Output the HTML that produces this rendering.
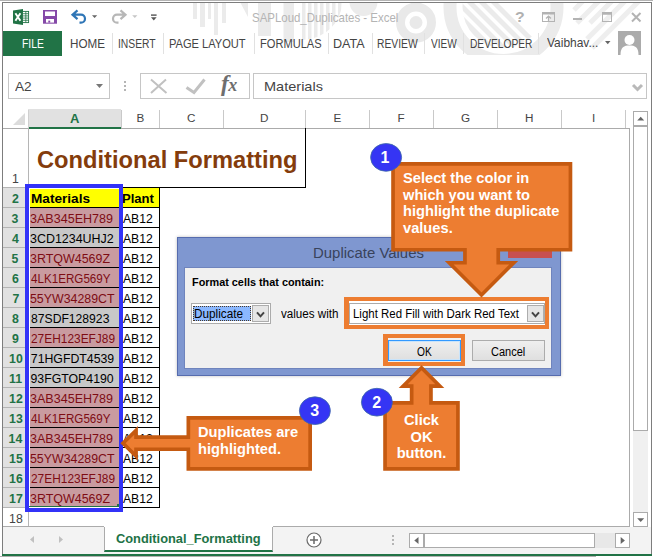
<!DOCTYPE html><html><head><meta charset="utf-8"><title>SAPLoud_Duplicates - Excel</title><style>
*{box-sizing:border-box;margin:0;padding:0}
html,body{width:653px;height:557px;overflow:hidden;background:#fff}
body{position:relative;font-family:"Liberation Sans",sans-serif;color:#444;}
.abs{position:absolute}
#win{position:absolute;left:2px;top:2px;width:650px;height:554px;background:#fff;border:1px solid #7d7d7d;border-bottom:none;overflow:hidden}
.t{position:absolute;white-space:nowrap;line-height:1;transform-origin:0 0}
.tab{position:absolute;top:37px;font-size:12px;color:#444;white-space:nowrap;line-height:14px;letter-spacing:-0.2px}
.sep{position:absolute;top:33px;width:1px;height:21px;background:#e1e1e1}
.ch{position:absolute;top:111px;height:17px;font-size:12px;color:#444;text-align:center;line-height:17px}
.cs{position:absolute;top:110px;width:1px;height:18px;background:#c9c9c9}
.rh{position:absolute;left:3px;width:25px;height:20px;font-size:12.5px;text-align:center;line-height:21px;border-bottom:1px solid #b5b5b5}
.rh.sel{background:#e1e1e1;color:#217346;font-weight:bold}
.ca{position:absolute;left:30px;width:89px;height:19px;font-size:12.3px;line-height:20px;padding-left:2px;white-space:nowrap;overflow:hidden}
.cb{position:absolute;left:123px;width:36px;height:19px;font-size:12.3px;line-height:20px;padding-left:1px;white-space:nowrap;color:#000;background:#fff}
.dup{background:#c99ba0;color:#8a1019}
.uni{background:#c8c8c8;color:#000}
.hdr{background:#ffff00;color:#000;font-weight:bold}
.hl{position:absolute;height:1px;background:#000}
.vl{position:absolute;width:1px;background:#000}
</style></head><body>
<div class="abs" style="left:0;top:0;width:653px;height:1px;background:#b4b4b4"></div>
<div id="win"></div>
<svg class="abs" style="left:3px;top:3px" width="648" height="52" viewBox="3 3 648 52">
<g fill="#ebebeb">
<rect x="193" y="2" width="4" height="17"/><rect x="200" y="2" width="5" height="25"/><rect x="208" y="2" width="3" height="17"/>
<rect x="214" y="2" width="4" height="33"/><rect x="222" y="2" width="4" height="21"/>
<polygon points="240,2 248,2 248,17"/>
<rect x="258" y="2" width="13" height="34"/><rect x="283.5" y="2" width="10.5" height="40"/>
<clipPath id="qd"><path d="M302,2 V40 A40,38 0 0 0 342,2 Z"/></clipPath>
<g clip-path="url(#qd)"><rect x="302" y="2" width="3.5" height="40"/><rect x="308" y="2" width="3.5" height="40"/><rect x="314" y="2" width="3.5" height="40"/><rect x="320" y="2" width="3.5" height="40"/><rect x="326" y="2" width="3.5" height="40"/><rect x="332" y="2" width="3.5" height="40"/><rect x="338" y="2" width="3.5" height="40"/></g>
<path d="M349.5,2 A14,14 0 0 0 377.5,2 Z"/>
</g>
<circle cx="416" cy="22.5" r="15.5" fill="none" stroke="#e9e9e9" stroke-width="9"/>
<circle cx="416" cy="22.5" r="6.5" fill="#e9e9e9"/>
<clipPath id="cp"><rect x="3" y="3" width="648" height="52"/></clipPath>
<clipPath id="hd"><circle cx="503.5" cy="7" r="41"/></clipPath>
<g clip-path="url(#cp)">
<circle cx="503.5" cy="7" r="53.5" fill="none" stroke="#ebebeb" stroke-width="13"/>
<g clip-path="url(#hd)"><g transform="translate(503.5,7) rotate(45)" fill="#ebebeb">
<rect x="-50" y="1" width="100" height="5"/><rect x="-50" y="9.5" width="100" height="5"/><rect x="-50" y="18" width="100" height="5"/><rect x="-50" y="26.5" width="100" height="5"/><rect x="-50" y="35" width="100" height="6"/>
</g></g>
<g stroke="#eeeeee" stroke-width="5">
<line x1="574" y1="10" x2="584" y2="0"/><line x1="577" y1="23" x2="600" y2="0"/><line x1="590" y1="23" x2="613" y2="0"/><line x1="587" y1="39" x2="626" y2="0"/><line x1="592" y1="48" x2="640" y2="0"/>
</g>
</g>
</svg>
<svg class="abs" style="left:3px;top:2px" width="647" height="28" viewBox="3 2 647 28">
<!-- excel icon -->
<path d="M13,10.6 L23,9 L23,25 L13,23.4 Z" fill="#217346"/>
<rect x="22.5" y="11.4" width="6.1" height="11.2" fill="#fff" stroke="#217346" stroke-width="0.9"/>
<g stroke="#217346" stroke-width="0.8"><line x1="23" y1="13.7" x2="28.5" y2="13.7"/><line x1="23" y1="15.9" x2="28.5" y2="15.9"/><line x1="23" y1="18.1" x2="28.5" y2="18.1"/><line x1="23" y1="20.3" x2="28.5" y2="20.3"/><line x1="25.8" y1="11.5" x2="25.8" y2="22.5"/></g>
<path d="M15.4,13.3 L20.4,20.8 M20.4,13.3 L15.4,20.8" stroke="#fff" stroke-width="1.9" fill="none"/>
<!-- save icon -->
<rect x="43" y="10" width="14" height="13.7" fill="#8549a8"/>
<rect x="45" y="11.5" width="10" height="4.5" fill="#fff"/>
<rect x="46" y="19" width="8" height="3.6" fill="#fff"/>
<rect x="48.3" y="20.6" width="1.9" height="2" fill="#8549a8"/>
<!-- undo -->
<path d="M77.5,10.3 L72.5,14.7 L77.5,19.1 M72.8,14.7 H81 A4,4 0 0 1 81,22.7 H79.5" fill="none" stroke="#2e75b6" stroke-width="2.2" stroke-linejoin="miter"/>
<path d="M92,15.2 h5.2 l-2.6,2.9 z" fill="#666"/>
<!-- redo -->
<path d="M120.5,10.3 L125.5,14.7 L120.5,19.1 M125.2,14.7 H117 A4,4 0 0 0 117,22.7 H118.5" fill="none" stroke="#b7b7b7" stroke-width="2.2" stroke-linejoin="miter"/>
<path d="M132.2,15.2 h5.2 l-2.6,2.9 z" fill="#c6c6c6"/>
<!-- customize -->
<rect x="151" y="14.4" width="5.6" height="1.4" fill="#555"/>
<path d="M151,17.3 h5.6 l-2.8,3.2 z" fill="#555"/>
<!-- window controls -->
<g fill="none" stroke="#b3b3b3">
<rect x="542.5" y="12.5" width="12" height="9" stroke-width="1"/>
<line x1="542" y1="13.5" x2="555" y2="13.5" stroke-width="2"/>
<path d="M548.5,21 V16 M546,18.5 L548.5,16 L551,18.5" stroke-width="1.2"/>
<line x1="573" y1="19" x2="582" y2="19" stroke-width="2"/>
<rect x="602.5" y="12.5" width="9" height="9" stroke-width="1"/>
<line x1="602" y1="13.5" x2="612" y2="13.5" stroke-width="2.5"/>
<path d="M632,13 L640.5,21.5 M640.5,13 L632,21.5" stroke-width="2"/>
</g>
</svg>
<div class="t" style="left:514.9px;top:7.8px;font:bold 15px Liberation Sans,sans-serif;transform:scaleX(1.0571);color:#b0b0b0;">?</div>
<div class="t" style="left:252.1px;top:9.8px;font:13px Liberation Sans,sans-serif;transform:scaleX(0.8805);color:#b4b4b4;">SAPLoud_Duplicates - Excel</div>
<div class="abs" style="left:3px;top:31px;width:59px;height:25px;background:#217346"></div>
<div class="t" style="left:21.5px;top:37px;font:12px Liberation Sans,sans-serif;transform:scaleX(0.8625);color:#fff;">FILE</div>
<div class="t" style="left:70.4px;top:37px;font:12px Liberation Sans,sans-serif;transform:scaleX(0.9714);color:#444;">HOME</div>
<div class="t" style="left:118.1px;top:37px;font:12px Liberation Sans,sans-serif;transform:scaleX(0.8605);color:#444;">INSERT</div>
<div class="t" style="left:169.3px;top:37px;font:12px Liberation Sans,sans-serif;transform:scaleX(0.9244);color:#444;">PAGE LAYOUT</div>
<div class="t" style="left:259.6px;top:37px;font:12px Liberation Sans,sans-serif;transform:scaleX(0.9246);color:#444;">FORMULAS</div>
<div class="t" style="left:333px;top:37px;font:12px Liberation Sans,sans-serif;transform:scaleX(1.0483);color:#444;">DATA</div>
<div class="t" style="left:377.1px;top:37px;font:12px Liberation Sans,sans-serif;transform:scaleX(0.8587);color:#444;">REVIEW</div>
<div class="t" style="left:431px;top:37px;font:12px Liberation Sans,sans-serif;transform:scaleX(0.8387);color:#444;">VIEW</div>
<div class="t" style="left:469.6px;top:37px;font:12px Liberation Sans,sans-serif;transform:scaleX(0.85);color:#444;">DEVELOPER</div>
<div class="sep" style="left:112px"></div>
<div class="sep" style="left:163px"></div>
<div class="sep" style="left:254px"></div>
<div class="sep" style="left:328px"></div>
<div class="sep" style="left:372px"></div>
<div class="sep" style="left:424px"></div>
<div class="sep" style="left:463px"></div>
<div class="sep" style="left:538px"></div>
<div class="t" style="left:547.4px;top:35px;font:13px Liberation Sans,sans-serif;transform:scaleX(0.92);color:#444;">Vaibhav...</div>
<svg class="abs" style="left:604px;top:30px" width="40" height="26" viewBox="604 30 40 26"><path d="M605,41 h5.5 l-2.75,3.2 z" fill="#666"/><rect x="618" y="31" width="23" height="24" fill="#ababab"/><circle cx="629.5" cy="40" r="5" fill="#fff"/><path d="M620.5,55 C620.5,47 624,45.5 629.5,45.5 C635,45.5 638.5,47 638.5,55 Z" fill="#fff"/></svg>
<div class="abs" style="left:8px;top:73px;width:102px;height:26px;border:1px solid #c6c6c6;background:#fff"></div>
<div class="t" style="left:15.2px;top:80.2px;font:12.5px Liberation Sans,sans-serif;transform:scaleX(1.0933);color:#444;">A2</div>
<svg class="abs" style="left:90px;top:73px" width="170" height="26" viewBox="90 73 170 26"><path d="M96,84 h7 l-3.5,4 z" fill="#777"/><g fill="#b5b5b5"><rect x="124" y="81" width="2" height="2"/><rect x="124" y="85" width="2" height="2"/><rect x="124" y="89" width="2" height="2"/></g><path d="M151,79.5 L166.5,93 M166,79.5 L151,93" stroke="#c1c1c1" stroke-width="2" fill="none"/><path d="M186.5,87.5 L194,92.5 L204.5,79.5" stroke="#c1c1c1" stroke-width="3" fill="none"/></svg>
<div class="abs" style="left:140px;top:73px;width:110px;height:26px;border:1px solid #c6c6c6;"></div>
<div class="t" style="left:221px;top:71.5px;font-family:'Liberation Serif',serif;font-style:italic;font-weight:bold;font-size:23.5px;color:#6e6e6e;letter-spacing:-0.5px">f<span style="font-size:18px;letter-spacing:0">x</span></div>
<div class="abs" style="left:253px;top:73px;width:394px;height:26px;border:1px solid #c6c6c6;background:#fff"></div>
<div class="t" style="left:264.4px;top:78.8px;font:13px Liberation Sans,sans-serif;transform:scaleX(1.1176);color:#444;">Materials</div>
<svg class="abs" style="left:630px;top:82px" width="16" height="12" viewBox="630 82 16 12"><path d="M633,85 L637.5,89.5 L642,85" stroke="#b9b9b9" stroke-width="3" fill="none"/></svg>
<div class="abs" style="left:3px;top:109px;width:627px;height:20px;background:#fff;border-bottom:1px solid #ababab"></div>
<svg class="abs" style="left:3px;top:109px" width="26" height="19" viewBox="3 109 26 19"><path d="M25,113 V125 H13 Z" fill="#dcdcdc"/></svg>
<div class="abs" style="left:28px;top:109px;width:93px;height:20px;background:#e1e1e1;border-bottom:2px solid #217346"></div>
<div class="t" style="left:70px;top:110.6px;font:bold 13px Liberation Sans,sans-serif;color:#217346;">A</div>
<div class="cs" style="left:121px"></div>
<div class="t" style="left:136.5px;top:111.2px;font:11.7px Liberation Sans,sans-serif;color:#444;">B</div>
<div class="cs" style="left:159px"></div>
<div class="t" style="left:187px;top:111.2px;font:11.7px Liberation Sans,sans-serif;color:#444;">C</div>
<div class="cs" style="left:223px"></div>
<div class="t" style="left:260px;top:111.2px;font:11.7px Liberation Sans,sans-serif;color:#444;">D</div>
<div class="cs" style="left:305px"></div>
<div class="t" style="left:333.5px;top:111.2px;font:11.7px Liberation Sans,sans-serif;color:#444;">E</div>
<div class="cs" style="left:369px"></div>
<div class="t" style="left:397.5px;top:111.2px;font:11.7px Liberation Sans,sans-serif;color:#444;">F</div>
<div class="cs" style="left:433px"></div>
<div class="t" style="left:461px;top:111.2px;font:11.7px Liberation Sans,sans-serif;color:#444;">G</div>
<div class="cs" style="left:497px"></div>
<div class="t" style="left:525px;top:111.2px;font:11.7px Liberation Sans,sans-serif;color:#444;">H</div>
<div class="cs" style="left:561px"></div>
<div class="t" style="left:592px;top:111.2px;font:11.7px Liberation Sans,sans-serif;color:#444;">I</div>
<div class="cs" style="left:625px"></div>
<div class="cs" style="left:28px;background:#d0d0d0"></div>
<div class="abs" style="left:28px;top:128px;width:1px;height:398px;background:#b5b5b5"></div>
<div class="rh" style="top:128px;height:60px"></div>
<div class="t" style="left:12.1px;top:172.3px;font:12.3px Liberation Sans,sans-serif;color:#444;">1</div>
<div class="rh sel" style="top:188px"></div>
<div class="t" style="left:12.1px;top:191.9px;font:bold 12.3px Liberation Sans,sans-serif;color:#217346;">2</div>
<div class="rh sel" style="top:208px"></div>
<div class="t" style="left:11.6px;top:211.9px;font:bold 12.3px Liberation Sans,sans-serif;color:#217346;">3</div>
<div class="rh sel" style="top:228px"></div>
<div class="t" style="left:12.1px;top:231.9px;font:bold 12.3px Liberation Sans,sans-serif;color:#217346;">4</div>
<div class="rh sel" style="top:248px"></div>
<div class="t" style="left:11.6px;top:251.9px;font:bold 12.3px Liberation Sans,sans-serif;color:#217346;">5</div>
<div class="rh sel" style="top:268px"></div>
<div class="t" style="left:12.1px;top:271.9px;font:bold 12.3px Liberation Sans,sans-serif;color:#217346;">6</div>
<div class="rh sel" style="top:288px"></div>
<div class="t" style="left:12.6px;top:291.9px;font:bold 12.3px Liberation Sans,sans-serif;color:#217346;">7</div>
<div class="rh sel" style="top:308px"></div>
<div class="t" style="left:12.1px;top:311.9px;font:bold 12.3px Liberation Sans,sans-serif;color:#217346;">8</div>
<div class="rh sel" style="top:328px"></div>
<div class="t" style="left:12.1px;top:331.9px;font:bold 12.3px Liberation Sans,sans-serif;color:#217346;">9</div>
<div class="rh sel" style="top:348px"></div>
<div class="t" style="left:9.1px;top:351.9px;font:bold 12.3px Liberation Sans,sans-serif;color:#217346;">10</div>
<div class="rh sel" style="top:368px"></div>
<div class="t" style="left:9.1px;top:371.9px;font:bold 12.3px Liberation Sans,sans-serif;color:#217346;">11</div>
<div class="rh sel" style="top:388px"></div>
<div class="t" style="left:9.1px;top:391.9px;font:bold 12.3px Liberation Sans,sans-serif;color:#217346;">12</div>
<div class="rh sel" style="top:408px"></div>
<div class="t" style="left:9.1px;top:411.9px;font:bold 12.3px Liberation Sans,sans-serif;color:#217346;">13</div>
<div class="rh sel" style="top:428px"></div>
<div class="t" style="left:8.6px;top:431.9px;font:bold 12.3px Liberation Sans,sans-serif;color:#217346;">14</div>
<div class="rh sel" style="top:448px"></div>
<div class="t" style="left:9.1px;top:451.9px;font:bold 12.3px Liberation Sans,sans-serif;color:#217346;">15</div>
<div class="rh sel" style="top:468px"></div>
<div class="t" style="left:9.1px;top:471.9px;font:bold 12.3px Liberation Sans,sans-serif;color:#217346;">16</div>
<div class="rh sel" style="top:488px"></div>
<div class="t" style="left:9.1px;top:491.9px;font:bold 12.3px Liberation Sans,sans-serif;color:#217346;">17</div>
<div class="rh" style="top:508px;height:18px;border-bottom:none"></div>
<div class="t" style="left:9.1px;top:511.9px;font:12.3px Liberation Sans,sans-serif;color:#444;">18</div>
<div class="abs" style="left:3px;top:526px;width:627px;height:1px;background:#ababab"></div>
<div class="abs" style="left:629px;top:128px;width:1px;height:399px;background:#ababab"></div>
<div class="abs" style="left:29px;top:128px;width:277px;height:60px;border-right:1px solid #000;border-bottom:1px solid #000;"></div>
<div class="t" style="left:36.5px;top:146.6px;font:bold 23px Liberation Sans,sans-serif;transform:scaleX(1.0299);color:#843c0c;">Conditional Formatting</div>
<div class="ca hdr" style="top:188px"></div>
<div class="cb hdr" style="top:188px"></div>
<div class="t" style="left:30.9px;top:191.7px;font:bold 12.3px Liberation Sans,sans-serif;transform:scaleX(1.1077);color:#000;">Materials</div>
<div class="t" style="left:122.3px;top:191.7px;font:bold 12.3px Liberation Sans,sans-serif;transform:scaleX(1.0621);color:#000;">Plant</div>
<div class="ca dup" style="top:208px"></div>
<div class="cb" style="top:208px"></div>
<div class="t" style="left:30px;top:212.1px;font:12.3px Liberation Sans,sans-serif;transform:scaleX(1.02);color:#7e0c14;">3AB345EH789</div>
<div class="t" style="left:123.2px;top:212.1px;font:12.3px Liberation Sans,sans-serif;transform:scaleX(0.99);color:#000;">AB12</div>
<div class="ca uni" style="top:228px"></div>
<div class="cb" style="top:228px"></div>
<div class="t" style="left:30px;top:232.1px;font:12.3px Liberation Sans,sans-serif;transform:scaleX(1.0123);color:#000;">3CD1234UHJ2</div>
<div class="t" style="left:123.2px;top:232.1px;font:12.3px Liberation Sans,sans-serif;transform:scaleX(0.99);color:#000;">AB12</div>
<div class="ca dup" style="top:248px"></div>
<div class="cb" style="top:248px"></div>
<div class="t" style="left:30px;top:252.1px;font:12.3px Liberation Sans,sans-serif;transform:scaleX(1.0128);color:#7e0c14;">3RTQW4569Z</div>
<div class="t" style="left:123.2px;top:252.1px;font:12.3px Liberation Sans,sans-serif;transform:scaleX(0.99);color:#000;">AB12</div>
<div class="ca dup" style="top:268px"></div>
<div class="cb" style="top:268px"></div>
<div class="t" style="left:31.2px;top:272.1px;font:12.3px Liberation Sans,sans-serif;transform:scaleX(0.9464);color:#7e0c14;">4LK1ERG569Y</div>
<div class="t" style="left:123.2px;top:272.1px;font:12.3px Liberation Sans,sans-serif;transform:scaleX(0.99);color:#000;">AB12</div>
<div class="ca dup" style="top:288px"></div>
<div class="cb" style="top:288px"></div>
<div class="t" style="left:30.2px;top:292.1px;font:12.3px Liberation Sans,sans-serif;transform:scaleX(1.0048);color:#7e0c14;">55YW34289CT</div>
<div class="t" style="left:123.2px;top:292.1px;font:12.3px Liberation Sans,sans-serif;transform:scaleX(0.99);color:#000;">AB12</div>
<div class="ca uni" style="top:308px"></div>
<div class="cb" style="top:308px"></div>
<div class="t" style="left:30.9px;top:312.1px;font:12.3px Liberation Sans,sans-serif;transform:scaleX(0.9885);color:#000;">87SDF128923</div>
<div class="t" style="left:123.2px;top:312.1px;font:12.3px Liberation Sans,sans-serif;transform:scaleX(0.99);color:#000;">AB12</div>
<div class="ca dup" style="top:328px"></div>
<div class="cb" style="top:328px"></div>
<div class="t" style="left:30.9px;top:332.1px;font:12.3px Liberation Sans,sans-serif;transform:scaleX(0.9682);color:#7e0c14;">27EH123EFJ89</div>
<div class="t" style="left:123.2px;top:332.1px;font:12.3px Liberation Sans,sans-serif;transform:scaleX(0.99);color:#000;">AB12</div>
<div class="ca uni" style="top:348px"></div>
<div class="cb" style="top:348px"></div>
<div class="t" style="left:30.8px;top:352.1px;font:12.3px Liberation Sans,sans-serif;color:#000;">71HGFDT4539</div>
<div class="t" style="left:123.2px;top:352.1px;font:12.3px Liberation Sans,sans-serif;transform:scaleX(0.99);color:#000;">AB12</div>
<div class="ca uni" style="top:368px"></div>
<div class="cb" style="top:368px"></div>
<div class="t" style="left:30.5px;top:372.1px;font:12.3px Liberation Sans,sans-serif;color:#000;">93FGTOP4190</div>
<div class="t" style="left:123.2px;top:372.1px;font:12.3px Liberation Sans,sans-serif;transform:scaleX(0.99);color:#000;">AB12</div>
<div class="ca dup" style="top:388px"></div>
<div class="cb" style="top:388px"></div>
<div class="t" style="left:30px;top:392.1px;font:12.3px Liberation Sans,sans-serif;transform:scaleX(1.02);color:#7e0c14;">3AB345EH789</div>
<div class="t" style="left:123.2px;top:392.1px;font:12.3px Liberation Sans,sans-serif;transform:scaleX(0.99);color:#000;">AB12</div>
<div class="ca dup" style="top:408px"></div>
<div class="cb" style="top:408px"></div>
<div class="t" style="left:31.2px;top:412.1px;font:12.3px Liberation Sans,sans-serif;transform:scaleX(0.9464);color:#7e0c14;">4LK1ERG569Y</div>
<div class="t" style="left:123.2px;top:412.1px;font:12.3px Liberation Sans,sans-serif;transform:scaleX(0.99);color:#000;">AB12</div>
<div class="ca dup" style="top:428px"></div>
<div class="cb" style="top:428px"></div>
<div class="t" style="left:30px;top:432.1px;font:12.3px Liberation Sans,sans-serif;transform:scaleX(1.02);color:#7e0c14;">3AB345EH789</div>
<div class="t" style="left:123.2px;top:432.1px;font:12.3px Liberation Sans,sans-serif;transform:scaleX(0.99);color:#000;">AB12</div>
<div class="ca dup" style="top:448px"></div>
<div class="cb" style="top:448px"></div>
<div class="t" style="left:30.2px;top:452.1px;font:12.3px Liberation Sans,sans-serif;transform:scaleX(1.0048);color:#7e0c14;">55YW34289CT</div>
<div class="t" style="left:123.2px;top:452.1px;font:12.3px Liberation Sans,sans-serif;transform:scaleX(0.99);color:#000;">AB12</div>
<div class="ca dup" style="top:468px"></div>
<div class="cb" style="top:468px"></div>
<div class="t" style="left:30.9px;top:472.1px;font:12.3px Liberation Sans,sans-serif;transform:scaleX(0.9682);color:#7e0c14;">27EH123EFJ89</div>
<div class="t" style="left:123.2px;top:472.1px;font:12.3px Liberation Sans,sans-serif;transform:scaleX(0.99);color:#000;">AB12</div>
<div class="ca dup" style="top:488px"></div>
<div class="cb" style="top:488px"></div>
<div class="t" style="left:30px;top:492.1px;font:12.3px Liberation Sans,sans-serif;transform:scaleX(1.0128);color:#7e0c14;">3RTQW4569Z</div>
<div class="t" style="left:123.2px;top:492.1px;font:12.3px Liberation Sans,sans-serif;transform:scaleX(0.99);color:#000;">AB12</div>
<div class="hl" style="left:123px;top:187px;width:37px"></div>
<div class="hl" style="left:30px;top:207px;width:130px"></div>
<div class="hl" style="left:30px;top:227px;width:130px"></div>
<div class="hl" style="left:30px;top:247px;width:130px"></div>
<div class="hl" style="left:30px;top:267px;width:130px"></div>
<div class="hl" style="left:30px;top:287px;width:130px"></div>
<div class="hl" style="left:30px;top:307px;width:130px"></div>
<div class="hl" style="left:30px;top:327px;width:130px"></div>
<div class="hl" style="left:30px;top:347px;width:130px"></div>
<div class="hl" style="left:30px;top:367px;width:130px"></div>
<div class="hl" style="left:30px;top:387px;width:130px"></div>
<div class="hl" style="left:30px;top:407px;width:130px"></div>
<div class="hl" style="left:30px;top:427px;width:130px"></div>
<div class="hl" style="left:30px;top:447px;width:130px"></div>
<div class="hl" style="left:30px;top:467px;width:130px"></div>
<div class="hl" style="left:30px;top:487px;width:130px"></div>
<div class="hl" style="left:123px;top:507px;width:37px"></div>
<div class="abs" style="left:29px;top:188px;width:91px;height:1px;background:#fff"></div>
<div class="abs" style="left:29px;top:507px;width:91px;height:1px;background:#fff"></div>
<div class="vl" style="left:159px;top:187px;height:321px"></div>
<div class="vl" style="left:122px;top:187px;height:321px"></div>
<div class="abs" style="left:29px;top:506px;width:88px;height:1px;background:#217346"></div><div class="abs" style="left:117px;top:504px;width:2px;height:3px;background:#217346"></div>
<div class="abs" style="left:25px;top:184px;width:98px;height:328px;border:4px solid #3232f8"></div>
<div class="abs" style="left:3px;top:527px;width:648px;height:27px;background:#f3f3f3"></div>
<div class="abs" style="left:104px;top:527px;width:169px;height:25px;background:#fff;border-left:1px solid #ababab;border-right:1px solid #ababab;border-bottom:2px solid #217346"></div>
<div class="abs" style="left:104px;top:526px;width:169px;height:1px;background:#fff"></div>
<div class="t" style="left:116px;top:531.2px;font:bold 13px Liberation Sans,sans-serif;transform:scaleX(0.9863);color:#217346;">Conditional_Formatting</div>
<svg class="abs" style="left:3px;top:527px" width="648" height="27" viewBox="3 527 648 27">
<path d="M34,536 v7 l-4,-3.5 z" fill="#c0c0c0"/><path d="M59,536 v7 l4,-3.5 z" fill="#c0c0c0"/>
<circle cx="314" cy="540" r="7" fill="#fff" stroke="#6a6a6a" stroke-width="1.2"/><path d="M310,540 h8 M314,536 v8" stroke="#6a6a6a" stroke-width="1.5"/>
<g fill="#b5b5b5"><rect x="392" y="535" width="2" height="2"/><rect x="392" y="539" width="2" height="2"/><rect x="392" y="543" width="2" height="2"/></g>
<rect x="409.5" y="533.5" width="14" height="14" fill="#fff" stroke="#ababab"/><path d="M418.5,537 v7 l-4.2,-3.5 z" fill="#666"/>
<rect x="424.5" y="533.5" width="170" height="14" fill="#fff" stroke="#ababab"/>
<rect x="595" y="533" width="20" height="15" fill="#e8e8e8"/>
<rect x="615.5" y="533.5" width="14" height="14" fill="#fff" stroke="#ababab"/><path d="M620.7,537 v7 l4.2,-3.5 z" fill="#666"/>
</svg>
<div class="abs" style="left:2px;top:554px;width:650px;height:2px;background:#217346"></div>
<div class="abs" style="left:0px;top:556px;width:596px;height:1px;background:#b0b0b0"></div>
<div class="abs" style="left:630px;top:109px;width:21px;height:418px;background:#fff"></div>
<svg class="abs" style="left:630px;top:109px" width="21" height="420" viewBox="630 109 21 420">
<rect x="633.5" y="111.5" width="14" height="14" fill="#fff" stroke="#ababab"/><path d="M637.2,120.5 h7 l-3.5,-3.8 z" fill="#666"/>
<rect x="633.5" y="126.5" width="14" height="304" fill="#fff" stroke="#ababab"/>
<rect x="633" y="431" width="15" height="81" fill="#f0f0f0"/>
<rect x="633.5" y="512.5" width="14" height="14" fill="#fff" stroke="#ababab"/><path d="M637.2,518.2 h7 l-3.5,3.8 z" fill="#666"/>
</svg>
<div class="abs" style="left:177px;top:237px;width:384px;height:139px;background:#7f97d0;border:1px solid #566cae;box-shadow:0 0 3px rgba(0,0,0,.25)"></div>
<div class="abs" style="left:184px;top:267px;width:368px;height:102px;background:#f0f0f0;border:1px solid #6f84bd"></div>
<div class="abs" style="left:508px;top:238px;width:44px;height:20px;background:#c75050"></div>
<svg class="abs" style="left:508px;top:238px" width="44" height="20" viewBox="0 0 44 20"><path d="M18,3.5 L26,11.5 M26,3.5 L18,11.5" stroke="#fff" stroke-width="1.6" fill="none"/></svg>
<div class="t" style="left:312.8px;top:243.5px;font:15.5px Liberation Sans,sans-serif;transform:scaleX(0.9632);color:#39435c;">Duplicate Values</div>
<div class="t" style="left:191.5px;top:275.5px;font:bold 11.5px Liberation Sans,sans-serif;transform:scaleX(0.9442);color:#000;">Format cells that contain:</div>
<div class="abs" style="left:191px;top:303px;width:80px;height:21px;background:#fff;border:1px solid #ababab"></div>
<div class="abs" style="left:193px;top:306px;width:58px;height:15px;background:#8bb8ff;outline:1px dotted #4a3a2a;outline-offset:-1px"></div>
<div class="t" style="left:194.4px;top:306.9px;font:12px Liberation Sans,sans-serif;transform:scaleX(0.9796);color:#000;">Duplicate</div>
<div class="abs" style="left:252px;top:305px;width:17px;height:17px;background:#e6e6e6;border:1px solid #adadad"></div>
<svg class="abs" style="left:252px;top:305px" width="17" height="17" viewBox="0 0 17 17"><path d="M5,7.3 L8.5,11.3 L12,7.3" stroke="#444" stroke-width="2" fill="none"/></svg>
<div class="t" style="left:281px;top:306.6px;font:12px Liberation Sans,sans-serif;transform:scaleX(0.9695);color:#000;">values with</div>
<div class="abs" style="left:344px;top:297px;width:205px;height:32px;border:4px solid #ed7d31;border-left-width:5px;background:#fff"></div>
<div class="abs" style="left:349px;top:303px;width:196px;height:21px;background:#fff;border:1px solid #ababab"></div>
<div class="t" style="left:352.5px;top:306.5px;font:12px Liberation Sans,sans-serif;transform:scaleX(0.9543);color:#000;">Light Red Fill with Dark Red Text</div>
<div class="abs" style="left:527px;top:305px;width:17px;height:17px;background:#e6e6e6;border:1px solid #adadad"></div>
<svg class="abs" style="left:527px;top:305px" width="17" height="17" viewBox="0 0 17 17"><path d="M5,7.3 L8.5,11.3 L12,7.3" stroke="#444" stroke-width="2" fill="none"/></svg>
<div class="abs" style="left:383px;top:334px;width:82px;height:32px;border:4px solid #ed7d31;border-left-width:5px;background:#f0f0f0"></div>
<div class="abs" style="left:388px;top:340px;width:73px;height:21px;background:linear-gradient(#efefef,#dfdfdf);border:1px solid #3399ff;box-shadow:inset 0 0 0 1px #c9e4fb"></div>
<div class="t" style="left:417.2px;top:344.8px;font:12px Liberation Sans,sans-serif;transform:scaleX(0.85);color:#000;">OK</div>
<div class="abs" style="left:472px;top:340px;width:73px;height:21px;background:linear-gradient(#efefef,#dfdfdf);border:1px solid #acacac"></div>
<div class="t" style="left:490.7px;top:344.8px;font:12px Liberation Sans,sans-serif;transform:scaleX(0.9167);color:#000;">Cancel</div>
<svg class="abs" style="left:0;top:0" width="653" height="557" viewBox="0 0 653 557">
<g fill="#ed7d31" stroke="#c55a11" stroke-width="3.7" stroke-linejoin="miter">
<path d="M393.05,163.85 H570.45 V249.75 H498.25 V262.75 H513.73 L481.5,294.98 L449.27,262.75 H464.95 V249.75 H393.05 Z"/>
<path d="M421.5,367.8 L439.85,386.15 H430.95 V402.95 H457.95 V468.85 H385.05 V402.95 H411.65 V386.15 H403.15 Z"/>
<path d="M188.35,417.85 H310.15 V468.95 H188.35 V449.25 H136.05 V456 L123,443.2 L136.05,430.4 V437.05 H188.35 Z"/>
</g>
<g fill="#3535f4" stroke="#3d6aa6" stroke-width="0.8">
<ellipse cx="386.1" cy="157.4" rx="15.5" ry="13.9"/><ellipse cx="376.9" cy="402.2" rx="15.5" ry="13.9"/><ellipse cx="314.9" cy="410.7" rx="15.5" ry="13.9"/>
</g>
<g font-family="Liberation Sans, sans-serif" font-weight="bold" fill="#fff">
<g font-size="16px" text-anchor="middle"><text x="384.9" y="163.1">1</text><text x="376.6" y="407.9">2</text><text x="314.6" y="416.4">3</text></g>
<g font-size="14.67px">
<text x="403" y="183">Select the color in</text><text x="403" y="199.5">which you want to</text><text x="403" y="216">highlight the duplicate</text><text x="403" y="232.5">values.</text>
<text x="198" y="437">Duplicates are</text><text x="198" y="453.5">highlighted.</text>
<g text-anchor="middle"><text x="421.5" y="425">Click</text><text x="421.5" y="441.5">OK</text><text x="421.5" y="457.5">button.</text></g>
</g>
</g>
</svg>
</body></html>
